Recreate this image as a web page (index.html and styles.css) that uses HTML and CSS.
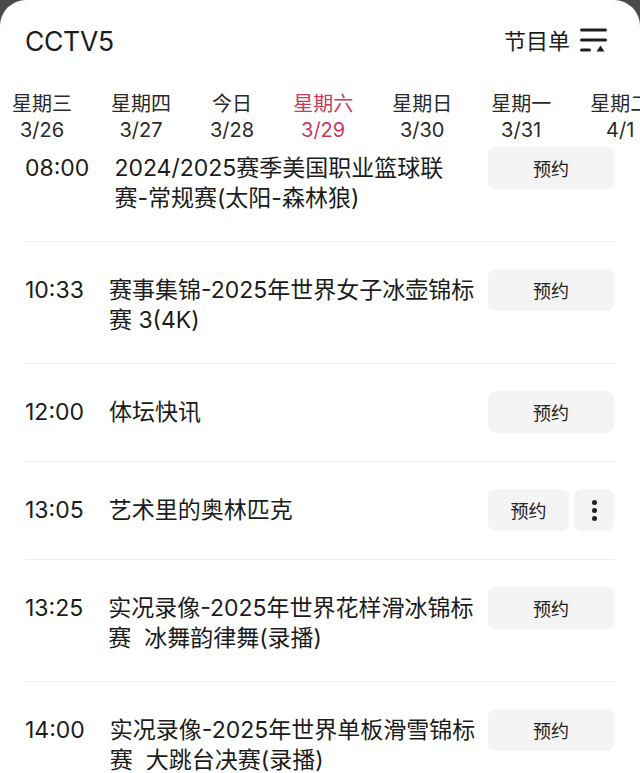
FILE: index.html
```html
<!DOCTYPE html>
<html lang="zh-CN">
<head>
    <meta charset="UTF-8">
    <meta name="viewport" content="width=device-width, initial-scale=1.0">
    <title>CCTV5 节目单</title>
    <link rel="stylesheet" href="styles.css">
</head>
<body>
    <div class="sheet">
        <header class="top-bar">
            <h1 class="channel">CCTV5</h1>
            <button class="guide-toggle">
                <span>节目单</span>
                <svg class="guide-icon" width="27" height="24" viewBox="0 0 27 24" aria-hidden="true">
                    <path d="M1.5 2h24M1.5 12h24M1.5 22h8" stroke="#1f1f1f" stroke-width="3" stroke-linecap="round"/>
                    <path d="M16.5 23.5h8l-4-6z" fill="#1f1f1f"/>
                </svg>
            </button>
        </header>

        <nav class="date-tabs">
            <div class="date-tab"><span>星期三</span><span>3/26</span></div>
            <div class="date-tab"><span>星期四</span><span>3/27</span></div>
            <div class="date-tab"><span>今日</span><span>3/28</span></div>
            <div class="date-tab active"><span>星期六</span><span>3/29</span></div>
            <div class="date-tab"><span>星期日</span><span>3/30</span></div>
            <div class="date-tab"><span>星期一</span><span>3/31</span></div>
            <div class="date-tab"><span>星期二</span><span>4/1</span></div>
        </nav>

        <div class="schedule">
            <ul class="program-list">
                <li class="program">
                    <span class="program-time">08:00</span>
                    <span class="program-title">2024/2025赛季美国职业篮球联<span class="keep">赛-常规赛</span>(太阳-森林狼)</span>
                    <div class="program-actions"><button class="remind-btn">预约</button></div>
                </li>
                <li class="program">
                    <span class="program-time">10:33</span>
                    <span class="program-title">赛事集锦-2025年世界女子冰壶锦标赛 3(4K)</span>
                    <div class="program-actions"><button class="remind-btn">预约</button></div>
                </li>
                <li class="program">
                    <span class="program-time">12:00</span>
                    <span class="program-title">体坛快讯</span>
                    <div class="program-actions"><button class="remind-btn">预约</button></div>
                </li>
                <li class="program">
                    <span class="program-time">13:05</span>
                    <span class="program-title">艺术里的奥林匹克</span>
                    <div class="program-actions">
                        <button class="remind-btn small">预约</button>
                        <button class="more-btn" aria-label="更多">
                            <span class="dot"></span><span class="dot"></span><span class="dot"></span>
                        </button>
                    </div>
                </li>
                <li class="program">
                    <span class="program-time">13:25</span>
                    <span class="program-title">实况录像-2025年世界花样滑冰锦标赛&nbsp; 冰舞韵律舞(录播)</span>
                    <div class="program-actions"><button class="remind-btn">预约</button></div>
                </li>
                <li class="program">
                    <span class="program-time">14:00</span>
                    <span class="program-title">实况录像-2025年世界单板滑雪锦标赛&nbsp; 大跳台决赛(录播)</span>
                    <div class="program-actions"><button class="remind-btn">预约</button></div>
                </li>
            </ul>
        </div>
    </div>
</body>
</html>
```

FILE: styles.css
```css
* {
    margin: 0;
    padding: 0;
    box-sizing: border-box;
    font-family: Inter, "Noto Sans CJK SC", sans-serif;
}

body {
    background: #4a4a4a;
    height: 773px;
    overflow: hidden;
}

.sheet {
    background: #fff;
    height: 773px;
    border-radius: 26px 26px 0 0;
    overflow: hidden;
    display: flex;
    flex-direction: column;
    color: #1c1c1c;
}

.top-bar {
    height: 82px;
    padding: 0 33px 0 25px;
    display: flex;
    justify-content: space-between;
    align-items: center;
    flex-shrink: 0;
}

.channel {
    font-size: 26.5px;
    font-weight: 400;
    letter-spacing: -0.3px;
}

.guide-toggle {
    display: flex;
    align-items: center;
    gap: 10px;
    background: none;
    border: none;
    color: #1c1c1c;
    font-size: 22px;
    margin-top: -4px;
}

.guide-icon {
    display: block;
    margin-top: 2px;
}

.date-tabs {
    display: flex;
    gap: 39px;
    padding: 9px 0 0 12px;
    height: 63px;
    flex-shrink: 0;
}

.date-tab {
    display: flex;
    flex-direction: column;
    align-items: center;
    flex-shrink: 0;
    font-size: 20px;
    line-height: 26px;
    color: #2a2a2a;
}

.date-tab.active {
    color: #c83b5c;
}

.schedule {
    flex: 1;
    overflow: hidden;
}

/* list is scrolled a little, first row sits under the tabs */
.program-list {
    list-style: none;
    margin-top: -25px;
    padding: 0 25px;
}

.program {
    display: flex;
    align-items: flex-start;
    padding: 27px 1px 28px 0;
    border-bottom: 1px solid #efefef;
}

.program-time,
.program-title {
    font-size: 23px;
    line-height: 30px;
    margin-top: 6px;
}

.program-time {
    flex-shrink: 0;
    margin-right: 25px;
}

.program-title {
    flex: 1;
    margin-right: 12px;
}

.keep {
    white-space: nowrap;
}

.program-actions {
    display: flex;
    gap: 5px;
    flex-shrink: 0;
}

.remind-btn {
    width: 126px;
    height: 42px;
    background: #f4f4f4;
    border: none;
    border-radius: 8px;
    color: #222;
    font-size: 18px;
}

.remind-btn.small {
    width: 81px;
}

.more-btn {
    width: 40px;
    height: 42px;
    background: #f4f4f4;
    border: none;
    border-radius: 8px;
    display: flex;
    flex-direction: column;
    align-items: center;
    justify-content: center;
    gap: 3px;
}

.dot {
    width: 5px;
    height: 5px;
    border-radius: 50%;
    background: #222;
}
```
